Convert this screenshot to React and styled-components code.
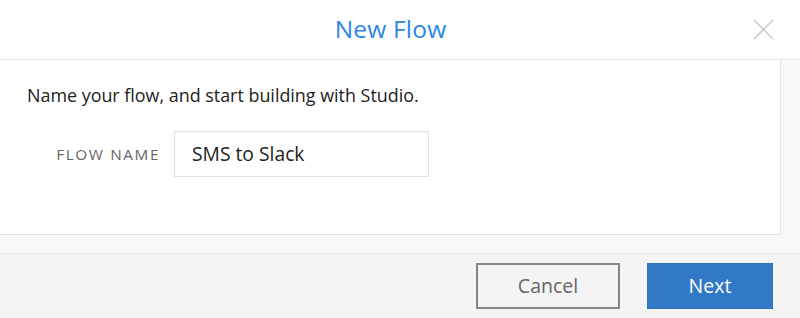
import React from "react";
import styled, { createGlobalStyle } from "styled-components";

const Global = createGlobalStyle`
  html, body { margin: 0; padding: 0; background: #ffffff; }
  body { font-family: "Open Sans", "Noto Sans", sans-serif; }
  * { box-sizing: border-box; }
`;

const Modal = styled.div`
  width: 800px;
  height: 318px;
  display: flex;
  flex-direction: column;
  background: #ffffff;
  overflow: hidden;
`;

const Header = styled.header`
  position: relative;
  height: 60px;
  flex: none;
  display: flex;
  align-items: center;
  justify-content: center;
  padding-right: 19px;
  border-bottom: 1px solid #e3e3e3;
`;

const Title = styled.h1`
  margin: 0 0 2px 0;
  font-weight: 400;
  font-size: 24.5px;
  color: #2b86e6;
  letter-spacing: 0.2px;
`;

const Close = styled.button`
  position: absolute;
  right: 26px;
  top: 19px;
  width: 21px;
  height: 21px;
  padding: 0;
  border: 0;
  background: transparent;
  cursor: pointer;
`;

const Body = styled.div`
  flex: none;
  height: 194px;
  background: #f8f8f8;
  padding: 0 19px 18px 0;
  border-bottom: 1px solid #e6e6e6;
  display: flex;
`;

const Panel = styled.section`
  flex: 1;
  background: #ffffff;
  border-right: 1px solid #e4e4e4;
  border-bottom: 1px solid #e4e4e4;
  padding: 22px 0 0 27px;
`;

const Intro = styled.p`
  margin: 0;
  font-size: 17.9px;
  line-height: 26px;
  color: #222222;
`;

const Field = styled.div`
  margin-top: 23px;
  display: flex;
  align-items: center;
  gap: 14px;
`;

const Label = styled.label`
  width: 133px;
  text-align: right;
  font-size: 15.3px;
  letter-spacing: 1.6px;
  color: #666666;
  text-transform: uppercase;
`;

const Input = styled.input`
  width: 255px;
  height: 46px;
  border: 1px solid #e2e2e2;
  box-shadow: inset 0 1px 2px rgba(0, 0, 0, 0.04);
  padding: 0 16px 2px 17px;
  font-family: inherit;
  font-size: 19.3px;
  color: #222222;
  outline: none;
  background: #ffffff;
`;

const Footer = styled.footer`
  flex: 1;
  background: #f4f4f4;
  display: flex;
  justify-content: flex-end;
  align-items: flex-start;
  padding: 9px 27px 0 0;
  gap: 27px;
`;

const Button = styled.button`
  height: 46px;
  width: ${(p) => p.$w}px;
  font-family: inherit;
  font-size: 19.5px;
  padding: 0 0 2px 0;
  cursor: pointer;
  border: ${(p) => (p.$primary ? "1px solid #2e73bd" : "2px solid #868686")};
  background: ${(p) => (p.$primary ? "#3178c6" : "#f4f4f4")};
  color: ${(p) => (p.$primary ? "#ffffff" : "#666666")};
`;

export default function App() {
  return (
    <>
      <Global />
      <Modal>
        <Header>
          <Title>New Flow</Title>
          <Close aria-label="Close">
            <svg width="21" height="21" viewBox="0 0 21 21">
              <path d="M1 1 L20 20 M20 1 L1 20" stroke="#c6c6c6" strokeWidth="1.3" fill="none" />
            </svg>
          </Close>
        </Header>
        <Body>
          <Panel>
            <Intro>Name your flow, and start building with Studio.</Intro>
            <Field>
              <Label htmlFor="flow-name">Flow Name</Label>
              <Input id="flow-name" defaultValue="SMS to Slack" />
            </Field>
          </Panel>
        </Body>
        <Footer>
          <Button $w={144}>Cancel</Button>
          <Button $primary $w={126}>Next</Button>
        </Footer>
      </Modal>
    </>
  );
}
